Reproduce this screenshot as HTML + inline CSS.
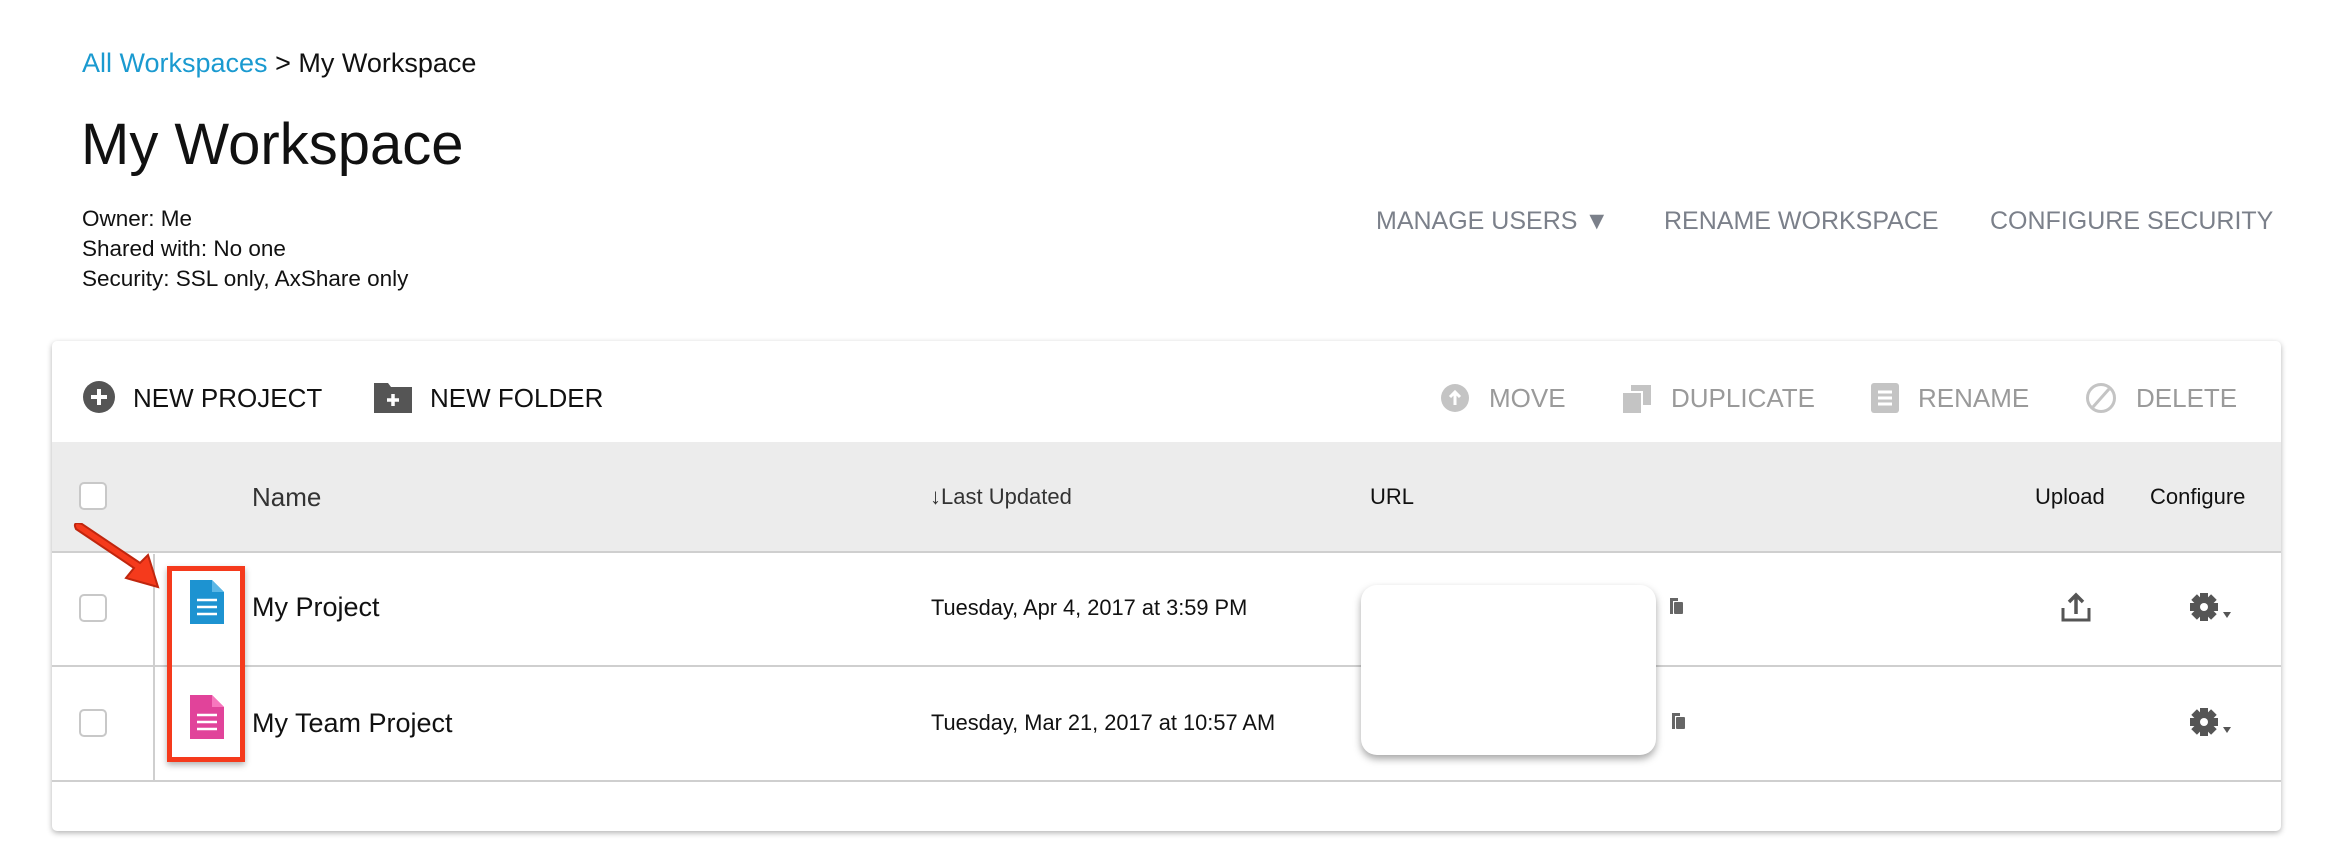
<!DOCTYPE html>
<html><head><meta charset="utf-8"><style>
*{margin:0;padding:0;box-sizing:border-box}
body{width:2338px;height:860px;background:#fff;font-family:"Liberation Sans",Arial,sans-serif;color:#111;position:relative;overflow:hidden}
.a{position:absolute;white-space:nowrap}
.g{color:#7b808a}
.t{color:#9a9a9a}
.cb{position:absolute;width:28px;height:28px;border:2px solid #c8c8c8;border-radius:5px;background:#fff}
</style></head><body>
<div class="a" style="left:82px;top:48px;font-size:27px"><span style="color:#1a9ad0">All Workspaces</span> &gt; My Workspace</div>
<div class="a" style="left:81px;top:111px;font-size:58px">My Workspace</div>
<div class="a" style="left:82px;top:204px;font-size:22.5px;line-height:30px">Owner: Me<br>Shared with: No one<br>Security: SSL only, AxShare only</div>
<div class="a g" style="left:1376px;top:207px;font-size:25px">MANAGE USERS ▼</div>
<div class="a g" style="left:1664px;top:207px;font-size:25px">RENAME WORKSPACE</div>
<div class="a g" style="left:1990px;top:207px;font-size:25px">CONFIGURE SECURITY</div>

<div class="a" style="left:52px;top:341px;width:2229px;height:490px;background:#fff;border-radius:5px;box-shadow:0 2px 6px rgba(0,0,0,.3)">
</div>
<!-- toolbar -->
<svg class="a" style="left:83px;top:381px" width="32" height="32"><circle cx="16" cy="16" r="16" fill="#555"/><path d="M16 8v16M8 16h16" stroke="#fff" stroke-width="4"/></svg>
<div class="a" style="left:133px;top:383px;font-size:26px">NEW PROJECT</div>
<svg class="a" style="left:374px;top:381px" width="38" height="32"><path d="M0 2h14l3 4h21v26H0z" fill="#555"/><path d="M19 13v12M13 19h12" stroke="#fff" stroke-width="3.5"/></svg>
<div class="a" style="left:430px;top:383px;font-size:26px">NEW FOLDER</div>
<svg class="a" style="left:1440px;top:383px" width="30" height="30"><circle cx="15" cy="15" r="14" fill="#c4c4c4"/><path d="M15 22V9M10 14l5-5 5 5" stroke="#fff" stroke-width="3" fill="none"/></svg>
<div class="a t" style="left:1489px;top:383px;font-size:26px">MOVE</div>
<svg class="a" style="left:1623px;top:383px" width="30" height="30"><rect x="0" y="10" width="18" height="20" fill="#c4c4c4"/><path d="M8 8V2h20v20h-8V8z" fill="#c4c4c4"/></svg>
<div class="a t" style="left:1671px;top:383px;font-size:26px">DUPLICATE</div>
<svg class="a" style="left:1871px;top:383px" width="28" height="30"><rect width="28" height="30" rx="3" fill="#c4c4c4"/><path d="M7 9h14M7 15h14M7 21h14" stroke="#fff" stroke-width="3"/></svg>
<div class="a t" style="left:1918px;top:383px;font-size:26px">RENAME</div>
<svg class="a" style="left:2085px;top:382px" width="32" height="32"><circle cx="16" cy="16" r="13.5" fill="none" stroke="#c4c4c4" stroke-width="3"/><path d="M8 25L24 7" stroke="#c4c4c4" stroke-width="3"/></svg>
<div class="a t" style="left:2136px;top:383px;font-size:26px">DELETE</div>

<!-- header -->
<div class="a" style="left:52px;top:442px;width:2229px;height:111px;background:#ececec;border-bottom:2px solid #cfcfcf"></div>
<div class="cb" style="left:79px;top:482px"></div>
<div class="a" style="left:252px;top:482px;font-size:26px;color:#333">Name</div>
<div class="a" style="left:930px;top:484px;font-size:22px;color:#333">↓Last Updated</div>
<div class="a" style="left:1370px;top:484px;font-size:22px">URL</div>
<div class="a" style="left:2035px;top:484px;font-size:22px">Upload</div>
<div class="a" style="left:2150px;top:484px;font-size:22px">Configure</div>

<!-- rows -->
<div class="a" style="left:52px;top:665px;width:2229px;height:2px;background:#cfcfcf"></div>
<div class="a" style="left:52px;top:780px;width:2229px;height:2px;background:#cfcfcf"></div>
<div class="a" style="left:153px;top:554px;width:2px;height:228px;background:#cfcfcf"></div>
<div class="cb" style="left:79px;top:594px"></div>
<div class="cb" style="left:79px;top:709px"></div>

<svg class="a" style="left:190px;top:580px" width="34" height="44"><path d="M0 0h22l12 12v32H0z" fill="#1d93d1"/><path d="M22 0v12h12z" fill="#5bb7e6"/><path d="M7 20h20M7 27h20M7 34h20" stroke="#fff" stroke-width="2.5"/></svg>
<svg class="a" style="left:190px;top:695px" width="34" height="44"><path d="M0 0h22l12 12v32H0z" fill="#e1439a"/><path d="M22 0v12h12z" fill="#f777bd"/><path d="M7 20h20M7 27h20M7 34h20" stroke="#fff" stroke-width="2.5"/></svg>
<div class="a" style="left:167px;top:566px;width:78px;height:196px;border:5px solid #f53a1c;box-shadow:0 3px 6px rgba(0,0,0,.3)"></div>
<svg class="a" style="left:68px;top:523px" width="95" height="75"><path d="M8 6 L66 45 L58 55 L90 64 L80 32 L72 40 L14 1 Q4 -2 8 6z" fill="#f53a1c" stroke="#c0260e" stroke-width="2"/></svg>

<div class="a" style="left:252px;top:592px;font-size:27px">My Project</div>
<div class="a" style="left:252px;top:708px;font-size:27px">My Team Project</div>
<div class="a" style="left:931px;top:595px;font-size:21.8px">Tuesday, Apr 4, 2017 at 3:59 PM</div>
<div class="a" style="left:931px;top:710px;font-size:21.8px">Tuesday, Mar 21, 2017 at 10:57 AM</div>

<svg class="a" style="left:1670px;top:598px" width="14" height="16"><path d="M0 0h8v3H3v13H0z" fill="#666"/><rect x="4" y="4" width="9" height="12" rx="1" fill="#666"/></svg>
<svg class="a" style="left:1672px;top:713px" width="14" height="16"><path d="M0 0h8v3H3v13H0z" fill="#666"/><rect x="4" y="4" width="9" height="12" rx="1" fill="#666"/></svg>
<div class="a" style="left:1361px;top:585px;width:295px;height:170px;background:#fff;border-radius:16px;box-shadow:0 4px 8px rgba(0,0,0,.35)"></div>

<svg class="a" style="left:2061px;top:592px" width="30" height="30"><path d="M15 22V3M8 10l7-7 7 7" stroke="#555" stroke-width="3.5" fill="none"/><path d="M2 16v12h26V16" stroke="#555" stroke-width="3" fill="none"/></svg>
<svg class="a" style="left:2189px;top:592px" width="45" height="30"><g transform="translate(15 15)" fill="#555"><circle r="10"/><rect x="-4" y="-14" width="8" height="28"/><rect x="-4" y="-14" width="8" height="28" transform="rotate(45)"/><rect x="-4" y="-14" width="8" height="28" transform="rotate(90)"/><rect x="-4" y="-14" width="8" height="28" transform="rotate(135)"/><circle r="4" fill="#fff"/></g><path d="M34 20h8l-4 6z" fill="#555"/></svg>
<svg class="a" style="left:2189px;top:707px" width="45" height="30"><g transform="translate(15 15)" fill="#555"><circle r="10"/><rect x="-4" y="-14" width="8" height="28"/><rect x="-4" y="-14" width="8" height="28" transform="rotate(45)"/><rect x="-4" y="-14" width="8" height="28" transform="rotate(90)"/><rect x="-4" y="-14" width="8" height="28" transform="rotate(135)"/><circle r="4" fill="#fff"/></g><path d="M34 20h8l-4 6z" fill="#555"/></svg>
</body></html>
